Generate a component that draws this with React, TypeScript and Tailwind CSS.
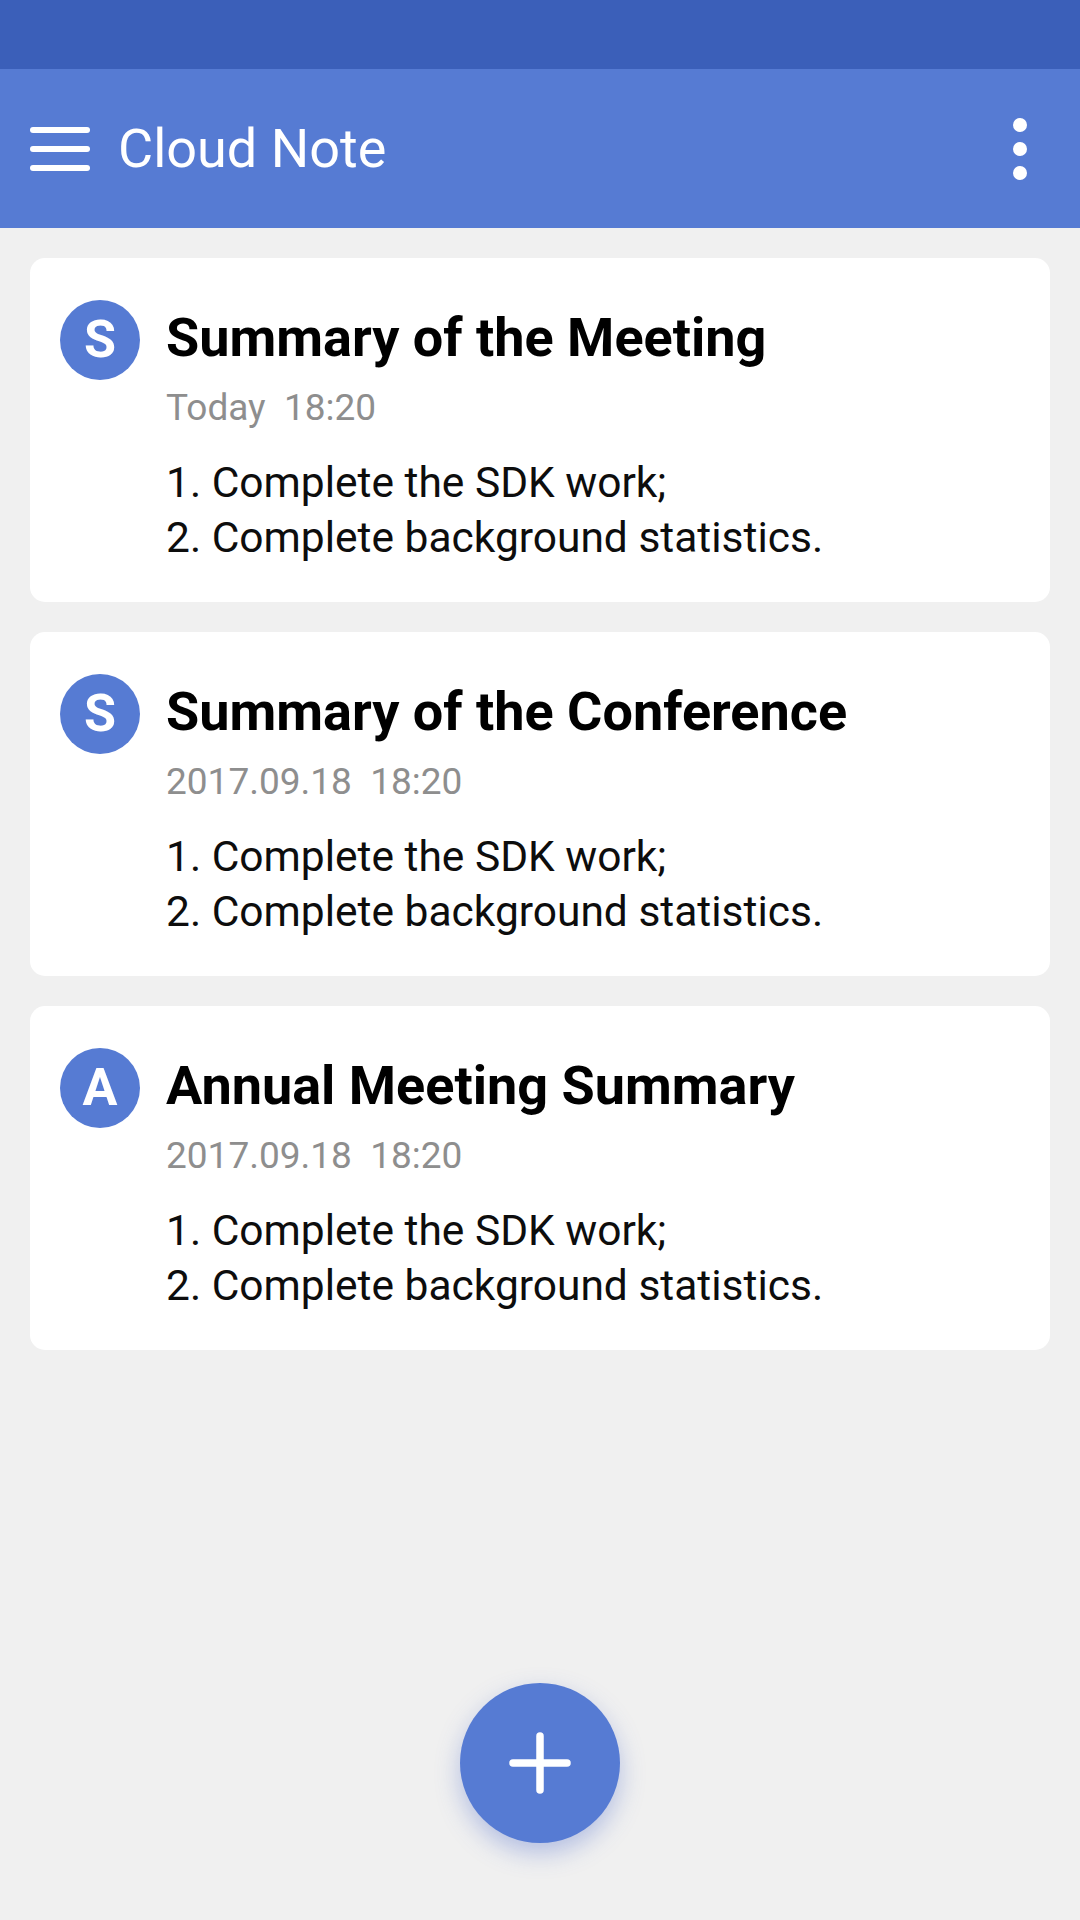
const NOTES = [
  { letter: "S", title: "Summary of the Meeting", date: "Today\u00a0\u00a018:20" },
  { letter: "S", title: "Summary of the Conference", date: "2017.09.18\u00a0\u00a018:20" },
  { letter: "A", title: "Annual Meeting Summary", date: "2017.09.18\u00a0\u00a018:20" },
];

const LINES = ["1. Complete the SDK work;", "2. Complete background statistics."];

function NoteCard({ letter, title, date }: { letter: string; title: string; date: string }) {
  return (
    <div className="flex gap-[26px] rounded-[15px] bg-white pl-[30px] pr-[30px] pt-[42px] pb-[37px]">
      <div className="flex h-[80px] w-[80px] shrink-0 items-center justify-center rounded-full bg-[#567bd3] text-[52px] font-bold leading-none text-white">
        {letter}
      </div>
      <div className="flex min-w-0 flex-col">
        <h2 className="text-[54px] font-bold leading-[76px] text-black">{title}</h2>
        <div className="mt-[10px] text-[37px] leading-[44px] text-[#8e8e8e]">{date}</div>
        <div className="mt-[25px] text-[42.5px] leading-[55px] text-[#0d0d0d]">
          {LINES.map((l) => (
            <div key={l}>{l}</div>
          ))}
        </div>
      </div>
    </div>
  );
}

export default function App() {
  return (
    <div
      className="flex h-[1920px] w-[1080px] flex-col bg-[#f0f0f0]"
      style={{ fontFamily: "Roboto, 'Noto Sans', sans-serif" }}
    >
      <div className="h-[69px] bg-[#3b5fb9]" />
      <header className="flex h-[159px] items-center bg-[#567bd3] pl-[30px] pr-[53px]">
        <div className="flex w-[60px] flex-col gap-[13px]">
          <span className="h-[6px] rounded-full bg-white" />
          <span className="h-[6px] rounded-full bg-white" />
          <span className="h-[6px] rounded-full bg-white" />
        </div>
        <h1 className="ml-[28px] text-[54px] leading-none text-white">Cloud Note</h1>
        <div className="ml-auto flex flex-col gap-[10px]">
          <span className="h-[14px] w-[14px] rounded-full bg-white" />
          <span className="h-[14px] w-[14px] rounded-full bg-white" />
          <span className="h-[14px] w-[14px] rounded-full bg-white" />
        </div>
      </header>

      <main className="flex flex-col gap-[30px] px-[30px] pt-[30px]">
        {NOTES.map((n) => (
          <NoteCard key={n.title} {...n} />
        ))}
      </main>

      <div className="mt-auto flex justify-center pb-[77px]">
        <button className="flex h-[160px] w-[160px] items-center justify-center rounded-full bg-[#567bd3] shadow-[0_10px_24px_rgba(70,100,200,0.35)]">
          <svg width="62" height="62" viewBox="0 0 62 62" fill="none">
            <path d="M31 4v54M4 31h54" stroke="white" strokeWidth="7.5" strokeLinecap="round" />
          </svg>
        </button>
      </div>
    </div>
  );
}
